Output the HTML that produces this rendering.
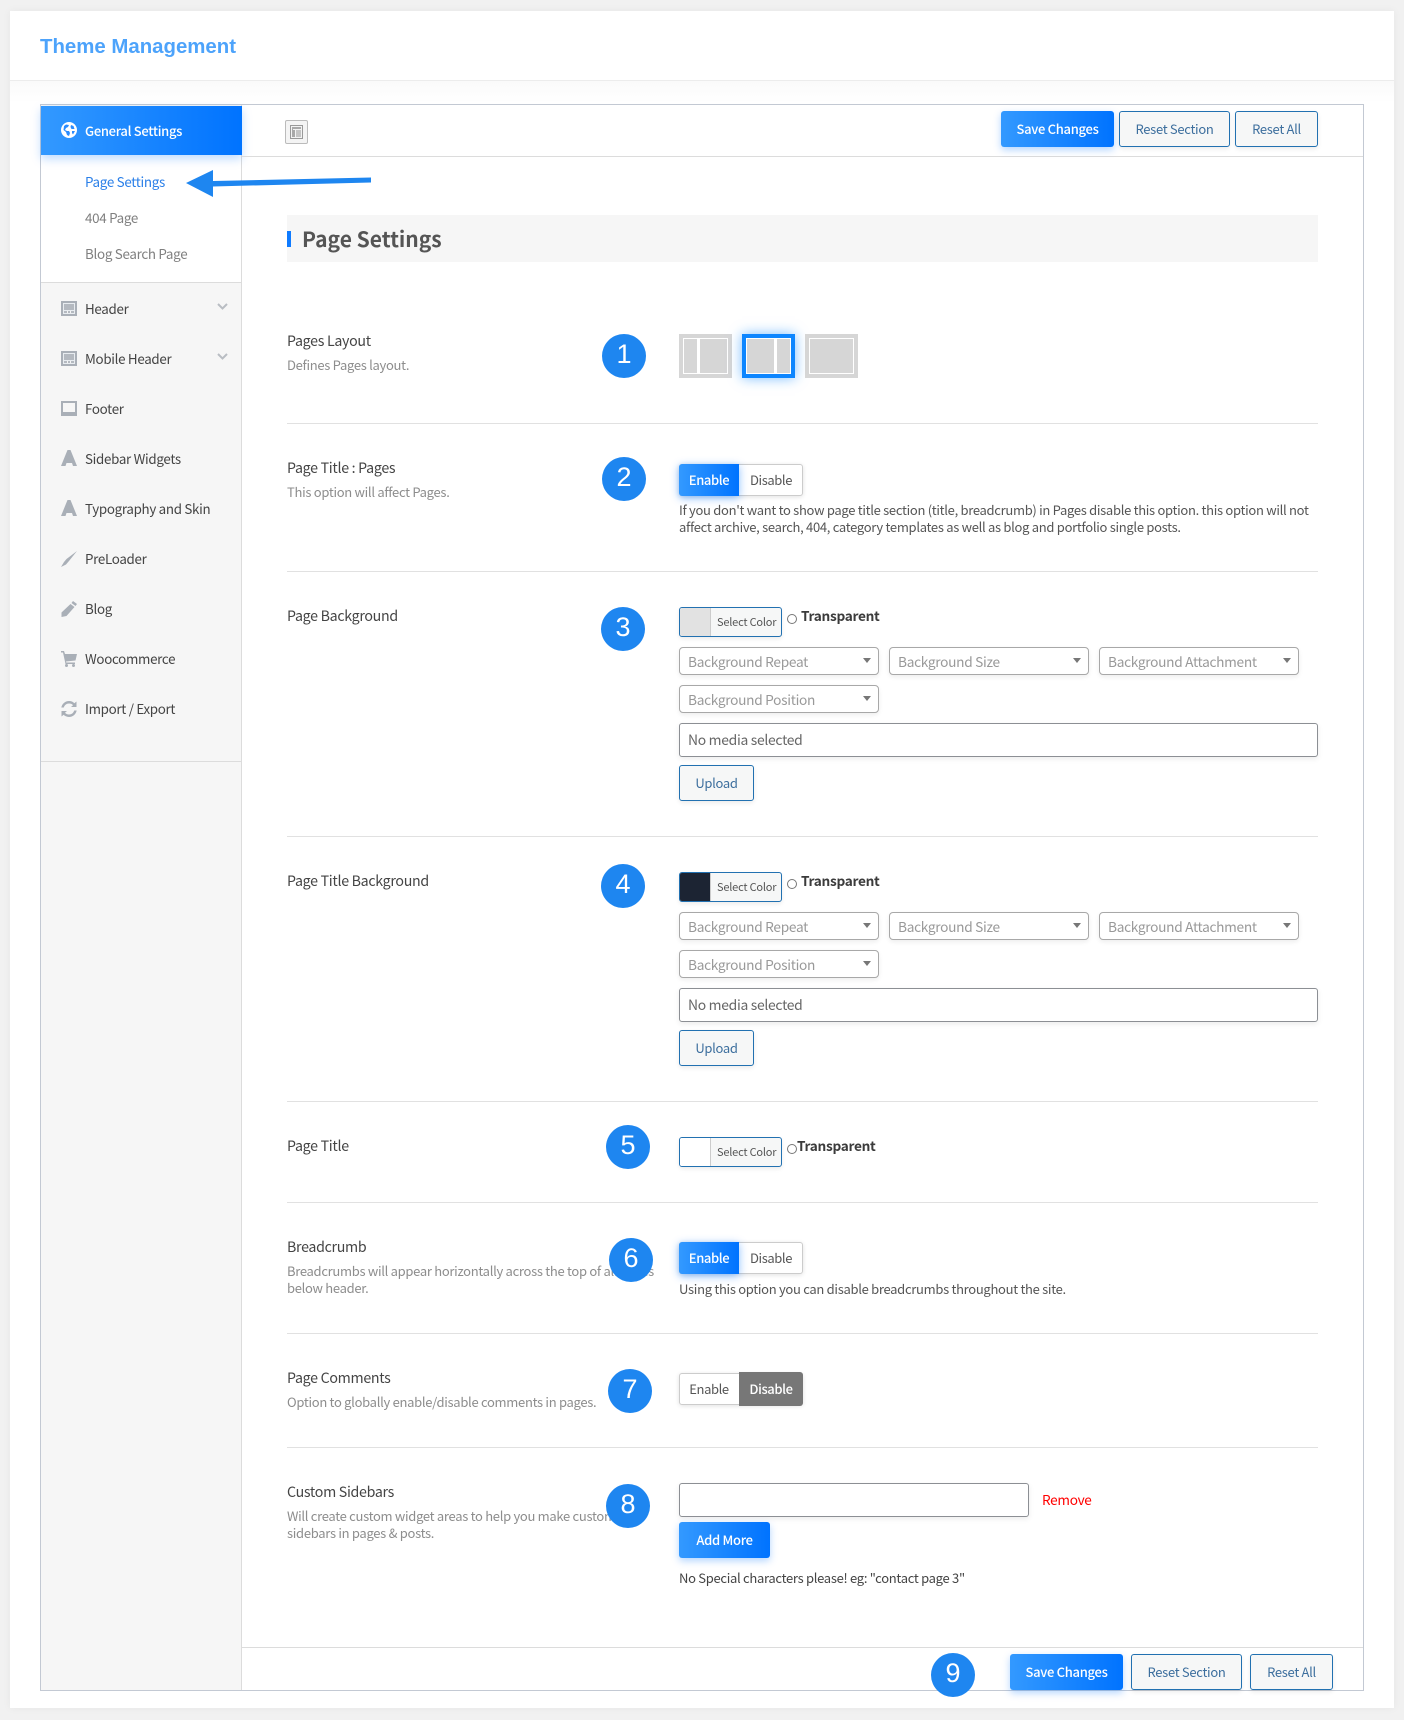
<!DOCTYPE html>
<html lang="en"><head><meta charset="utf-8"><title>Theme Management</title>
<style>
*{box-sizing:border-box}
html,body{margin:0;padding:0}
body{width:1404px;height:1720px;background:#f1f1f1;position:relative;overflow:hidden;font-family:"Noto Sans CJK SC","Liberation Sans",sans-serif;font-size:13px;letter-spacing:-.3px;color:#444}
.a,.t,.l,.d,.n,.b{position:absolute}
.t{white-space:nowrap;line-height:20px;height:20px}
.l{left:287px;white-space:nowrap;line-height:20px;font-size:14.2px;color:#444}
.d{left:287px;white-space:nowrap;line-height:17px;font-size:13px;color:#8d8d8d}
.hr{position:absolute;left:287px;width:1031px;height:1px;background:#e1e1e1}
.n{width:44px;height:44px;border-radius:50%;background:#1e86f0;color:#fff;font:27px/40px "Liberation Sans",sans-serif;letter-spacing:0;text-align:center;z-index:3}
.b{border-radius:3px;text-align:center;line-height:34px;font-size:13px;box-sizing:border-box}
.g{background:linear-gradient(90deg,#3399ff,#0073ff);color:#fff;font-weight:500;box-shadow:0 3px 8px rgba(0,115,255,.3);line-height:35px}
.o{background:#f6f7f7;border:1px solid #2271b1;color:#3d6f9e;box-shadow:0 2px 5px rgba(0,0,0,.08)}
.sel{position:absolute;width:200px;height:28px;border:1px solid #a8a8a8;border-radius:4px;background:#fff;color:#999;padding-left:8px;line-height:26px;font-size:13.7px;box-shadow:0 2px 5px rgba(0,0,0,.07)}
.sel:after{content:"";position:absolute;right:7px;top:10px;border:4px solid transparent;border-top:5px solid #777;border-bottom:0}
.cs{position:absolute;left:679px;width:103px;height:30px;border:1px solid #2271b1;border-radius:3px;background:#f6f7f7;box-shadow:0 2px 4px rgba(0,0,0,.08);font-size:11px;line-height:29px;color:#555;padding-left:37px;overflow:hidden;white-space:nowrap;letter-spacing:-.2px}
.cs i{position:absolute;left:0;top:0;width:31px;height:28px;border-right:1px solid #ccc}
.rd{position:absolute;left:787px;width:10px;height:10px;border:1px solid #777;border-radius:50%;background:#fff}
.tr{position:absolute;font-weight:700;color:#3b3b3b;font-size:13.65px;line-height:20px}
.inp{position:absolute;left:679px;background:#fff;border:1px solid #8c8f94;border-radius:3px;box-shadow:0 2px 6px rgba(0,0,0,.08);padding-left:8px;color:#666;font-size:13.9px}
.sw{position:absolute;left:679px;width:124px;height:32px;border:1px solid #ccc;border-radius:3px;background:#fff;box-shadow:0 1px 5px rgba(0,0,0,.12)}
.sw span{position:absolute;top:-1px;height:32px;line-height:32px;text-align:center;font-size:13px;letter-spacing:-.4px;color:#555}
.sw .x{left:-1px;width:60px}.sw .y{left:59px;width:64px}
.sw .on{background:linear-gradient(90deg,#3399ff,#0073ff);color:#fff;border-radius:3px 0 0 3px;box-shadow:0 2px 9px rgba(0,115,255,.45);font-weight:500}
.sw .of{background:#777;color:#fff;border-radius:0 3px 3px 0;font-weight:500;top:-2px;height:34px;line-height:34px}
.lay{position:absolute;top:334px;width:53px;height:44px;background:#d6d6d6;border:4px solid #d6d6d6}
.lay b{position:absolute;left:0;top:0;right:0;bottom:0;border:1px solid #fff}
.lay i{position:absolute;top:0;bottom:0;background:#fff;width:3px}
.it{color:#444;left:85px;font-size:13.35px}
.ic{position:absolute;left:61px;width:16px;height:16px}
.p{white-space:nowrap;position:absolute;font-size:13px;line-height:17px;color:#555}
</style></head><body>

<div class="a" style="left:10px;top:11px;width:1384px;height:1697px;background:#fff;box-shadow:0 0 8px rgba(0,0,0,.05)"></div>
<div class="a" style="left:10px;top:80px;width:1384px;height:1px;background:#ececec"></div>
<div class="a" style="left:10px;top:81px;width:1384px;height:22px;background:linear-gradient(#fafafa,#fff)"></div>
<div class="t" style="left:40px;top:34px;height:26px;font:700 20.4px/26px 'Liberation Sans',sans-serif;letter-spacing:0;color:#4da3fb">Theme Management</div>

<!-- frame -->
<div class="a" style="left:40px;top:104px;width:1324px;height:1587px;border:1px solid #c3c9d3;background:#fff"></div>
<div class="a" style="left:41px;top:105px;width:201px;height:1585px;background:#f6f6f6;border-right:1px solid #dcdcdc"></div>
<div class="a" style="left:41px;top:155px;width:201px;height:128px;background:#fff;border-right:1px solid #dcdcdc;border-bottom:1px solid #dcdcdc"></div>
<div class="a" style="left:41px;top:761px;width:200px;height:1px;background:#dcdcdc"></div>
<div class="a" style="left:41px;top:106px;width:201px;height:49px;background:linear-gradient(90deg,#3399ff,#0073ff);box-shadow:0 4px 9px rgba(0,115,255,.25)"></div>
<div class="a" style="left:242px;top:156px;width:1121px;height:1px;background:#dcdcdc"></div>
<div class="a" style="left:242px;top:1647px;width:1121px;height:1px;background:#dcdcdc"></div>

<!-- sidebar -->
<svg class="ic" style="top:122px" viewBox="0 0 16 16"><circle cx="8" cy="8" r="8" fill="#fff"/><path d="M5 2.500l3 .5-1 2-2 1-1 2 2 1 2 0 1 2-1 3-2-1-1-3-2.500-2 .5-4zM10 3l2.500 1 1 3-3 0-1-2zM11 9l3 0-2 3.500-1-1.500z" fill="#2a8cff"/></svg>
<div class="t" style="left:85px;top:120.500px;color:#fff;font-weight:500">General Settings</div>
<div class="t" style="left:85px;top:171px;color:#2a7fe8;font-size:13.4px">Page Settings</div>
<div class="t" style="left:85px;top:207px;color:#808080;font-size:13.4px">404 Page</div>
<div class="t" style="left:85px;top:243px;color:#808080;font-size:13.4px">Blog Search Page</div>

<svg class="ic" style="top:301px" viewBox="0 0 16 16"><path fill="#a9afb7" d="M0 0h16v15H0z"/><path fill="#e8ecf0" d="M2 2h12v11H2z"/><path fill="#b4b9c0" d="M3 3h10v6H3zM3 10h10v2H3z"/><path fill="#f4f4f4" d="M6 10h1v2H6zM9 10h1v2H9z"/></svg>
<div class="t it" style="top:299px">Header</div>
<svg class="a" style="left:217px;top:303px" width="11" height="7" viewBox="0 0 11 7"><path d="M1 1l4.500 4.500L10 1" fill="none" stroke="#b9bdc3" stroke-width="2"/></svg>
<svg class="ic" style="top:351px" viewBox="0 0 16 16"><path fill="#a9afb7" d="M0 0h16v15H0z"/><path fill="#e8ecf0" d="M2 2h12v11H2z"/><path fill="#b4b9c0" d="M3 3h10v6H3zM3 10h10v2H3z"/><path fill="#f4f4f4" d="M6 10h1v2H6zM9 10h1v2H9z"/></svg>
<div class="t it" style="top:349px">Mobile Header</div>
<svg class="a" style="left:217px;top:353px" width="11" height="7" viewBox="0 0 11 7"><path d="M1 1l4.500 4.500L10 1" fill="none" stroke="#b9bdc3" stroke-width="2"/></svg>
<svg class="ic" style="top:401px" viewBox="0 0 16 16"><path fill="#a9afb7" fill-rule="evenodd" d="M0 0h16v15H0zM2 2v9h12V2z"/></svg>
<div class="t it" style="top:399px">Footer</div>
<svg class="ic" style="top:450px" viewBox="0 0 16 16"><path fill="#a9afb7" d="M0 16L6.500 0h3L16 16h-4l-1-3H5.500l-1 3z"/></svg>
<div class="t it" style="top:449px">Sidebar Widgets</div>
<svg class="ic" style="top:500px" viewBox="0 0 16 16"><path fill="#a9afb7" d="M0 16L6.500 0h3L16 16h-4l-1-3H5.500l-1 3z"/></svg>
<div class="t it" style="top:499px">Typography and Skin</div>
<svg class="ic" style="top:551px" viewBox="0 0 16 16"><path fill="#a9afb7" d="M16 0L5.500 8 3 11 0 16l5-2.500 3-3.500z"/></svg>
<div class="t it" style="top:549px">PreLoader</div>
<svg class="ic" style="top:601px" viewBox="0 0 16 16"><path fill="#a9afb7" d="M12 0l4 3-1.500 2-4-3zM9.500 3l4 3-8 9-5 1 0-4.500z"/></svg>
<div class="t it" style="top:599px">Blog</div>
<svg class="ic" style="top:651px" viewBox="0 0 16 16"><path fill="#a9afb7" d="M0 0h3l1 3h12l-1.500 6.500-9.500 1 .3 1H14v1.500H4.500L2 1.500H0z"/><circle cx="5.500" cy="14.500" r="1.500" fill="#a9afb7"/><circle cx="12.500" cy="14.500" r="1.500" fill="#a9afb7"/></svg>
<div class="t it" style="top:649px">Woocommerce</div>
<svg class="ic" style="top:701px" viewBox="0 0 16 16"><path fill="#a9afb7" d="M8 0c2.500 0 4.300 1 5.300 2.200L15.500 .5V6H10l2-1.800C11 3 9.800 2.500 8 2.500 5.500 2.500 3.500 4 2.800 6.500H.3C1 3 4 0 8 0zM.5 10H6l-2 1.800C5 13 6.200 13.500 8 13.500c2.500 0 4.500-1.500 5.200-4h2.500C15 13 12 16 8 16c-2.500 0-4.300-1-5.300-2.200L.5 15.500z"/></svg>
<div class="t it" style="top:699px">Import / Export</div>

<!-- arrow -->
<svg class="a" style="left:184px;top:166px;z-index:4" width="190" height="34" viewBox="0 0 190 34"><path d="M2 17L29 4v11L187 11.500v5L29 20.500V31z" fill="#1e86f0"/></svg>

<!-- toolbar -->
<div class="a" style="left:285px;top:120px;width:23px;height:24px;border:1px solid #bbb;border-radius:2px;background:#f4f4f4"></div>
<svg class="a" style="left:290px;top:125px" width="13" height="14" viewBox="0 0 13 14"><path fill="#999" d="M0 0h13v14H0z"/><path fill="#f2f2f2" d="M1 1h11v12H1z"/><path fill="#a8a8a8" d="M2 2h9v2H2zM2 5h3v7H2zM2 4h1v1H2z"/><path fill="#c4c4c4" d="M6 5h5v7H6z"/></svg>
<div class="b g" style="left:1001px;top:111px;width:113px;height:36px">Save Changes</div>
<div class="b o" style="left:1119px;top:111px;width:111px;height:36px">Reset Section</div>
<div class="b o" style="left:1235px;top:111px;width:83px;height:36px">Reset All</div>

<!-- section title -->
<div class="a" style="left:287px;top:215px;width:1031px;height:47px;background:#f6f6f6"></div>
<div class="a" style="left:287px;top:231px;width:4px;height:16px;background:#0f7bff"></div>
<div class="t" style="left:302px;top:225px;height:28px;line-height:28px;font-size:21px;letter-spacing:0;font-weight:700;color:#555">Page Settings</div>

<!-- row 1 -->
<div class="l" style="top:331px">Pages Layout</div>
<div class="d" style="top:356px">Defines Pages layout.</div>
<div class="n" style="left:602px;top:334px">1</div>
<div class="lay" style="left:679px"><b></b><i style="left:14px"></i></div>
<div class="lay" style="left:742px;border-color:#0d86ff;box-shadow:0 0 12px rgba(13,134,255,.55)"><b></b><i style="left:28px"></i></div>
<div class="lay" style="left:805px"><b></b></div>
<div class="hr" style="top:423px"></div>

<!-- row 2 -->
<div class="l" style="top:458px">Page Title : Pages</div>
<div class="d" style="top:483px">This option will affect Pages.</div>
<div class="n" style="left:602px;top:457px">2</div>
<div class="sw" style="top:464px"><span class="x on">Enable</span><span class="y">Disable</span></div>
<div class="p" style="left:679px;top:501px">If you don't want to show page title section (title, breadcrumb) in Pages disable this option. this option will not<br>affect archive, search, 404, category templates as well as blog and portfolio single posts.</div>
<div class="hr" style="top:571px"></div>

<!-- row 3 -->
<div class="l" style="top:606px">Page Background</div>
<div class="n" style="left:601px;top:607px">3</div>
<div class="cs" style="top:607px"><i style="background:#e2e2e2"></i>Select Color</div>
<div class="rd" style="top:614px"></div>
<div class="tr" style="left:801px;top:605px">Transparent</div>
<div class="sel" style="left:679px;top:647px">Background Repeat</div>
<div class="sel" style="left:889px;top:647px">Background Size</div>
<div class="sel" style="left:1099px;top:647px">Background Attachment</div>
<div class="sel" style="left:679px;top:685px">Background Position</div>
<div class="inp" style="top:723px;width:639px;height:34px;line-height:32px">No media selected</div>
<div class="b o" style="left:679px;top:765px;width:75px;height:36px">Upload</div>
<div class="hr" style="top:836px"></div>

<!-- row 4 -->
<div class="l" style="top:871px">Page Title Background</div>
<div class="n" style="left:601px;top:864px">4</div>
<div class="cs" style="top:872px"><i style="background:#1c2433"></i>Select Color</div>
<div class="rd" style="top:879px"></div>
<div class="tr" style="left:801px;top:870px">Transparent</div>
<div class="sel" style="left:679px;top:912px">Background Repeat</div>
<div class="sel" style="left:889px;top:912px">Background Size</div>
<div class="sel" style="left:1099px;top:912px">Background Attachment</div>
<div class="sel" style="left:679px;top:950px">Background Position</div>
<div class="inp" style="top:988px;width:639px;height:34px;line-height:32px">No media selected</div>
<div class="b o" style="left:679px;top:1030px;width:75px;height:36px">Upload</div>
<div class="hr" style="top:1101px"></div>

<!-- row 5 -->
<div class="l" style="top:1136px">Page Title</div>
<div class="n" style="left:606px;top:1125px">5</div>
<div class="cs" style="top:1137px"><i style="background:#fff"></i>Select Color</div>
<div class="rd" style="top:1144px"></div>
<div class="tr" style="left:797px;top:1135px">Transparent</div>
<div class="hr" style="top:1202px"></div>

<!-- row 6 -->
<div class="l" style="top:1237px">Breadcrumb</div>
<div class="d" style="top:1262px">Breadcrumbs will appear horizontally across the top of all pages<br>below header.</div>
<div class="n" style="left:609px;top:1238px">6</div>
<div class="sw" style="top:1242px"><span class="x on">Enable</span><span class="y">Disable</span></div>
<div class="p" style="left:679px;top:1280px">Using this option you can disable breadcrumbs throughout the site.</div>
<div class="hr" style="top:1333px"></div>

<!-- row 7 -->
<div class="l" style="top:1368px">Page Comments</div>
<div class="d" style="top:1393px">Option to globally enable/disable comments in pages.</div>
<div class="n" style="left:608px;top:1369px">7</div>
<div class="sw" style="top:1373px"><span class="x">Enable</span><span class="y of">Disable</span></div>
<div class="hr" style="top:1447px"></div>

<!-- row 8 -->
<div class="l" style="top:1482px">Custom Sidebars</div>
<div class="d" style="top:1507px">Will create custom widget areas to help you make custom<br>sidebars in pages &amp; posts.</div>
<div class="n" style="left:606px;top:1484px">8</div>
<div class="inp" style="top:1483px;width:350px;height:34px"></div>
<div class="t" style="left:1042px;top:1489px;color:#f00;font-size:13.6px">Remove</div>
<div class="b g" style="left:679px;top:1522px;width:91px;height:36px">Add More</div>
<div class="p" style="left:679px;top:1569px;color:#444">No Special characters please! eg: "contact page 3"</div>

<!-- footer buttons -->
<div class="n" style="left:931px;top:1653px">9</div>
<div class="b g" style="left:1010px;top:1654px;width:113px;height:36px">Save Changes</div>
<div class="b o" style="left:1131px;top:1654px;width:111px;height:36px">Reset Section</div>
<div class="b o" style="left:1250px;top:1654px;width:83px;height:36px">Reset All</div>

</body></html>
